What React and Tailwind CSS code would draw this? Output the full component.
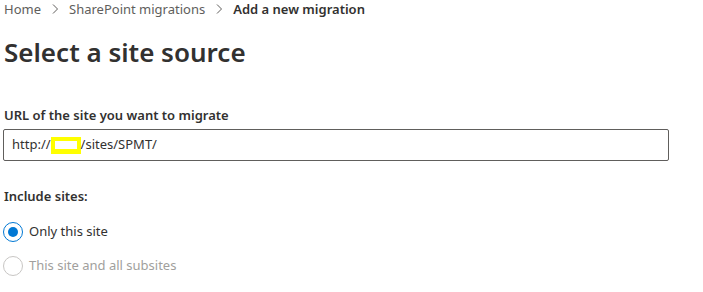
import React from "react";

function Chevron() {
  return (
    <svg width="12" height="12" viewBox="0 0 12 12" className="mx-[8px]" aria-hidden>
      <path d="M4 1.5 L8.5 6 L4 10.5" fill="none" stroke="#605e5c" strokeWidth="1" />
    </svg>
  );
}

export default function App() {
  return (
    <div
      className="w-[703px] h-[292px] bg-white text-[#323130] pl-[4px] overflow-hidden"
      style={{ fontFamily: '"Noto Sans", "Open Sans", sans-serif' }}
    >
      <nav className="flex items-center h-[18px] text-[13px] leading-[18px] text-[#605e5c]">
        <span>Home</span>
        <Chevron />
        <span>SharePoint migrations</span>
        <Chevron />
        <span className="font-semibold text-[#323130]">Add a new migration</span>
      </nav>

      <h1 className="mt-[16px] text-[26px] leading-[36px] font-semibold text-[#323130]">
        Select a site source
      </h1>

      <div className="mt-[35px] text-[13px] leading-[20px] font-semibold">
        URL of the site you want to migrate
      </div>
      <div className="mt-[4px] w-[666px] h-[32px] border border-[#605e5c] rounded-[2px] flex items-center pl-[8px] text-[13px] text-[#323130] -ml-[1px]">
        <span>http://</span>
        <span className="inline-flex w-[30px] h-[17px] bg-[#ffff00] items-center justify-center">
          <span className="w-[22px] h-[8px] bg-white" />
        </span>
        <span>/sites/SPMT/</span>
      </div>

      <div className="mt-[25px] text-[13px] leading-[20px] font-semibold">Include sites:</div>

      <div className="mt-[16px] flex items-center h-[20px] gap-[6px] -ml-[1px]">
        <span className="w-[20px] h-[20px] rounded-full border border-[#0078d4] flex items-center justify-center">
          <span className="w-[10px] h-[10px] rounded-full bg-[#0078d4]" />
        </span>
        <span className="text-[13px] text-[#323130]">Only this site</span>
      </div>

      <div className="mt-[14px] flex items-center h-[20px] gap-[6px] -ml-[1px]">
        <span className="w-[20px] h-[20px] rounded-full border border-[#c8c6c4]" />
        <span className="text-[13px] text-[#a19f9d]">This site and all subsites</span>
      </div>
    </div>
  );
}
